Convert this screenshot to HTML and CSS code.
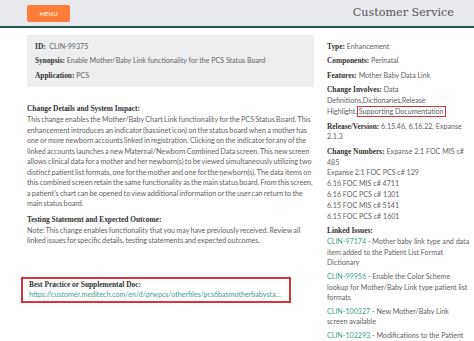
FILE: index.html
```html
<!DOCTYPE html>
<html lang="en">
<head>
  <meta charset="UTF-8">
  <meta name="viewport" content="width=device-width, initial-scale=1.0">
  <title>CLIN-99375 - Customer Service</title>
  <link rel="stylesheet" href="styles.css">
</head>
<body>
  <!-- Top bar -->
  <header class="topbar">
    <button class="menu-btn">MENU</button>
    <div class="site-title">Customer Service</div>
  </header>

  <div class="page">
    <!-- Main column -->
    <div class="main-col">
      <div class="summary">
        <div class="summary-row"><span class="label">ID:</span>&nbsp; CLIN-99375</div>
        <div class="summary-row"><span class="label">Synopsis:</span> Enable Mother/Baby Link functionality for the PCS Status Board</div>
        <div class="summary-row"><span class="label">Application:</span> PCS</div>
      </div>

      <div class="section">
        <div class="section-title">Change Details and System Impact:</div>
        <p>This change enables the Mother/Baby Chart Link functionality for the PCS Status Board. This enhancement introduces an indicator (bassinet icon) on the status board when a mother has one or more newborn accounts linked in registration. Clicking on the indicator for any of the linked accounts launches a new Maternal/Newborn Combined Data screen. This new screen allows clinical data for a mother and her newborn(s) to be viewed simultaneously utilizing two distinct patient list formats, one for the mother and one for the newborn(s). The data items on this combined screen retain the same functionality as the main status board. From this screen, a patient's chart can be opened to view additional information or the user can return to the main status board.</p>
      </div>

      <div class="section">
        <div class="section-title">Testing Statement and Expected Outcome:</div>
        <p>Note: This change enables functionality that you may have previously received. Review all linked issues for specific details, testing statements and expected outcomes.</p>
      </div>

      <div class="section doc-box">
        <div class="section-title">Best Practice or Supplemental Doc:</div>
        <a class="doc-link" href="#">https://customer.meditech.com/en/d/prwpcs/otherfiles/pcs6basmotherbabystatusboard.pdf</a>
      </div>
    </div>

    <!-- Side column -->
    <div class="side-col">
      <div class="side-item"><span class="label">Type:</span> Enhancement</div>
      <div class="side-item"><span class="label">Components:</span> Perinatal</div>
      <div class="side-item"><span class="label">Features:</span> Mother Baby Data Link</div>
      <div class="side-item"><span class="label">Change Involves:</span> Data Definitions,Dictionaries,Release Highlight,<span class="flagged">Supporting Documentation</span></div>
      <div class="side-item"><span class="label">Release/Version:</span> 6.15.46, 6.16.22, Expanse 2.1.3</div>
      <div class="side-item">
        <span class="label">Change Numbers:</span> Expanse 2.1 FOC MIS c# 485<br>
        Expanse 2.1 FOC PCS c# 129<br>
        6.16 FOC MIS c# 4711<br>
        6.16 FOC PCS c# 1301<br>
        6.15 FOC MIS c# 5141<br>
        6.15 FOC PCS c# 1601
      </div>
      <div class="side-item linked">
        <div class="label">Linked Issues:</div>
        <div class="issue"><a href="#">CLIN-97174</a> - Mother baby link type and data item added to the Patient List Format Dictionary</div>
        <div class="issue"><a href="#">CLIN-99956</a> - Enable the Color Scheme lookup for Mother/Baby Link type patient list formats</div>
        <div class="issue"><a href="#">CLIN-100327</a> - New Mother/Baby Link screen available</div>
        <div class="issue"><a href="#">CLIN-102293</a> - Modifications to the Patient List Format Dictionary for Mother/Baby Link</div>
      </div>
    </div>
  </div>
</body>
</html>
```

FILE: styles.css
```css
/* Global */
body {
  margin: 0;
  background: #fff;
  font-family: Lato, "Open Sans", sans-serif;
  font-size: 7.1px;
  line-height: 10.8px;
  color: #626262;
}

a {
  color: #3f9e8c;
  text-decoration: none;
}

.label {
  font-family: "Liberation Serif", serif;
  font-weight: bold;
  font-size: 7.4px;
  line-height: 1;
  color: #333;
}

div.label {
  line-height: 10.8px;
}

/* Top bar */
.topbar {
  height: 26px;
  background: #e8eaed;
  border-bottom: 2px solid #1d5a4a;
  display: flex;
  align-items: center;
  justify-content: space-between;
  padding: 0 20px 0 27px;
}

.menu-btn {
  width: 43px;
  height: 17px;
  margin-top: 1px;
  border: none;
  border-radius: 2px;
  background: #ff7c3a;
  color: #fde6d6;
  font-family: Lato, sans-serif;
  font-size: 6px;
  font-weight: bold;
  padding: 0;
}

.site-title {
  font-family: "DejaVu Serif", serif;
  font-size: 11.2px;
  color: #555;
  margin-top: 1px;
}

/* Layout */
.page {
  display: flex;
  gap: 13px;
  padding: 7px 0 0 27px;
}

.main-col {
  width: 287px;
  flex-shrink: 0;
}

.side-col {
  width: 143px;
  padding-top: 7px;
}

/* Summary box */
.summary {
  background: #eceef0;
  padding: 7px 8px 2px;
}

.summary-row {
  margin-bottom: 3.7px;
}

/* Sections */
.section {
  margin-top: 17px;
}

.section-title {
  font-family: "Liberation Serif", serif;
  font-weight: bold;
  font-size: 7.4px;
  color: #333;
}

.section p {
  margin: 0;
  font-size: 7.2px;
  line-height: 10.5px;
  word-spacing: -0.6px;
}

.section + .section {
  margin-top: 5px;
}

.doc-box {
  margin-left: -6px;
  width: 254px;
  padding: 1px 6px 0;
  border: 2px solid #d8333f;
}

.section.doc-box {
  margin-top: 30px;
}

.doc-link {
  display: block;
  white-space: nowrap;
  overflow: hidden;
  text-overflow: ellipsis;
}

/* Side column */
.side-item {
  margin-bottom: 3.7px;
}

.flagged {
  border: 1.5px solid #d8333f;
  padding: 0 1px;
}

.issue {
  margin-bottom: 2.5px;
}
```
